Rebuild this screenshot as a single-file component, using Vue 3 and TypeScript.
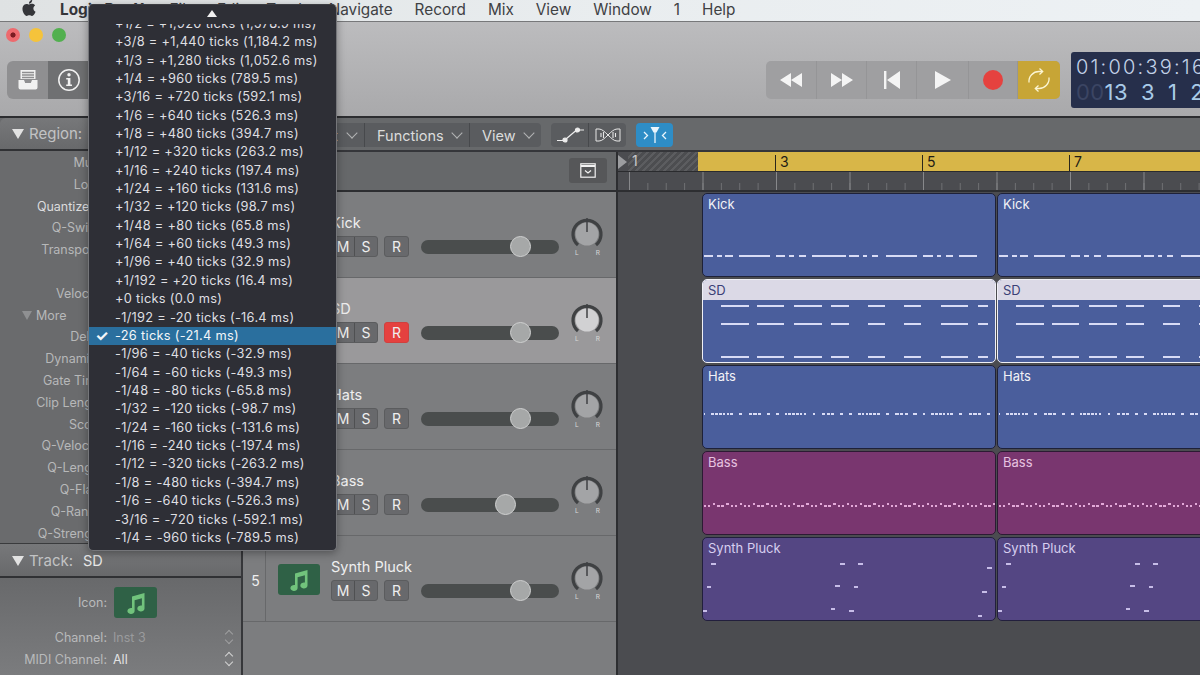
<script setup lang="ts">
interface Note { x: number; y: number; w: number }

const menuItems: string[] = [
  '+1/2 = +1,920 ticks (1,578.9 ms)', '+3/8 = +1,440 ticks (1,184.2 ms)', '+1/3 = +1,280 ticks (1,052.6 ms)',
  '+1/4 = +960 ticks (789.5 ms)', '+3/16 = +720 ticks (592.1 ms)', '+1/6 = +640 ticks (526.3 ms)',
  '+1/8 = +480 ticks (394.7 ms)', '+1/12 = +320 ticks (263.2 ms)', '+1/16 = +240 ticks (197.4 ms)',
  '+1/24 = +160 ticks (131.6 ms)', '+1/32 = +120 ticks (98.7 ms)', '+1/48 = +80 ticks (65.8 ms)',
  '+1/64 = +60 ticks (49.3 ms)', '+1/96 = +40 ticks (32.9 ms)', '+1/192 = +20 ticks (16.4 ms)',
  '+0 ticks (0.0 ms)', '-1/192 = -20 ticks (-16.4 ms)', '-26 ticks (-21.4 ms)',
  '-1/96 = -40 ticks (-32.9 ms)', '-1/64 = -60 ticks (-49.3 ms)', '-1/48 = -80 ticks (-65.8 ms)',
  '-1/32 = -120 ticks (-98.7 ms)', '-1/24 = -160 ticks (-131.6 ms)', '-1/16 = -240 ticks (-197.4 ms)',
  '-1/12 = -320 ticks (-263.2 ms)', '-1/8 = -480 ticks (-394.7 ms)', '-1/6 = -640 ticks (-526.3 ms)',
  '-3/16 = -720 ticks (-592.1 ms)', '-1/4 = -960 ticks (-789.5 ms)',
]
const selectedItem = '-26 ticks (-21.4 ms)'

const params: { label: string; more?: boolean; bright?: boolean }[] = [
  { label: 'Mute:' }, { label: 'Loop:' }, { label: 'Quantize:', bright: true }, { label: 'Q-Swing:' }, { label: 'Transpose:' },
  { label: '' }, { label: 'Velocity:' }, { label: 'More', more: true }, { label: 'Delay:' }, { label: 'Dynamics:' },
  { label: 'Gate Time:' }, { label: 'Clip Length:' }, { label: 'Score:' }, { label: 'Q-Velocity:' },
  { label: 'Q-Length:' }, { label: 'Q-Flam:' }, { label: 'Q-Range:' }, { label: 'Q-Strength:' },
]

const segs = (list: number[][], y: number): Note[] =>
  list.map(([a, b]) => ({ x: (a - 21) / 3, y, w: (b - a) / 3 }))

const kick = segs([[24, 50], [62, 78], [88, 112], [130, 222], [240, 268], [280, 295], [308, 330], [349, 450],
  [460, 490], [500, 514], [528, 547], [570, 663], [680, 710], [722, 735], [750, 770], [790, 843]], 61)

const sdX = [[74, 160], [184, 265], [295, 378], [405, 460], [515, 567], [625, 674], [735, 815], [845, 877]]
const sd = [...segs(sdX, 25), ...segs(sdX, 43), ...segs(sdX, 76)]

const hats: Note[] = (() => {
  const out: Note[] = [{ x: 1, y: 47, w: 1.4 }]
  for (let bar = 0; bar < 4; bar++) {
    const o = bar * 220
    for (let d = 0; d < 6; d++) out.push({ x: (46 + o + d * 11.4 - 21) / 3, y: 47, w: 2.6 })
    for (const [a, b] of [[130, 138], [158, 168], [172, 182], [186, 195], [212, 222], [240, 248]]) {
      if (a + o < 890) out.push({ x: (a + o - 21) / 3, y: 47, w: (b - a) / 3 })
    }
  }
  return out
})()

const bass: Note[] = (() => {
  const out: Note[] = []
  for (let i = 0; i < 22; i++) {
    const b = 1 + i * 13.35
    out.push({ x: b, y: 53, w: 2.4 }, { x: b + 4, y: 53, w: 2.4 }, { x: b + 9, y: 51, w: 2.4 })
  }
  return out
})()

const synth: Note[] = [[53, 25], [39, 48], [27, 72], [439, 25], [494, 25], [425, 47], [480, 48], [411, 70], [466, 72],
  [880, 29], [866, 53], [852, 77]].map(([x, y]) => ({ x: (x - 21 - 7) / 3, y, w: 4.6 }))

const tracks = [
  { n: 1, name: 'Kick', rec: false, sel: false, fader: 99, cls: 'blue', notes: kick },
  { n: 2, name: 'SD', rec: true, sel: true, fader: 99, cls: 'sel', notes: sd },
  { n: 3, name: 'Hats', rec: false, sel: false, fader: 99, cls: 'blue', notes: hats },
  { n: 4, name: 'Bass', rec: false, sel: false, fader: 84, cls: 'plum', notes: bass },
  { n: 5, name: 'Synth Pluck', rec: false, sel: false, fader: 99, cls: 'violet', notes: synth },
]
const marks = ['3', '5', '7', '9']
</script>

<template>
  <div class="app">
    <header class="menubar">
      <svg class="apple" viewBox="0 0 24 24"><path d="M12.152 6.896c-.948 0-2.415-1.078-3.96-1.04-2.04.027-3.91 1.183-4.961 3.014-2.117 3.675-.546 9.103 1.519 12.09 1.013 1.454 2.208 3.09 3.792 3.039 1.52-.065 2.09-.987 3.935-.987 1.831 0 2.35.987 3.96.948 1.637-.026 2.676-1.48 3.676-2.948 1.156-1.688 1.636-3.325 1.662-3.415-.039-.013-3.182-1.221-3.22-4.857-.026-3.04 2.48-4.494 2.597-4.559-1.429-2.09-3.623-2.324-4.39-2.376-2-.156-3.675 1.09-4.61 1.09zM15.53 3.83c.843-1.012 1.4-2.427 1.245-3.83-1.207.052-2.662.805-3.532 1.818-.78.896-1.454 2.338-1.273 3.714 1.338.104 2.715-.688 3.559-1.701"/></svg>
      <b class="appname">Logic Pro X</b>
      <span>File</span><span>Edit</span><span>Track</span><span>Navigate</span>
      <span>Record</span><span>Mix</span><span>View</span><span>Window</span><span>1</span><span>Help</span>
    </header>

    <section class="toolbar">
      <div class="tb-left">
        <div class="lights"><i class="l red"></i><i class="l yellow"></i><i class="l green"></i></div>
        <div class="tb-seg">
          <div class="tb-btn on">
            <svg width="22" height="24" viewBox="0 0 22 24" fill="none" stroke="#f1f1f1" stroke-width="1.3">
              <rect x="3.5" y="2" width="15" height="9" fill="#f1f1f1" stroke="none"/>
              <path d="M5 4.5h12M5 7h12M5 9.5h12" stroke="#8e8e90"/>
              <path d="M1.5 12h5.5l1.2 3h5.6l1.2-3h5.5v7.5a2 2 0 0 1-2 2h-15a2 2 0 0 1-2-2z" fill="#f1f1f1" stroke="none"/>
            </svg>
          </div>
          <div class="tb-btn">
            <svg width="24" height="24" viewBox="0 0 24 24" fill="none">
              <circle cx="12" cy="12" r="10.2" stroke="#f1f1f1" stroke-width="1.5"/>
              <circle cx="12" cy="6.8" r="1.7" fill="#f1f1f1"/>
              <path d="M9.2 10h4.2v6.4h1.6v1.6H9.2v-1.6h1.6v-4.8H9.2z" fill="#f1f1f1"/>
            </svg>
          </div>
        </div>
      </div>
      <div class="transport">
        <div class="t-cell" style="width:51px"><svg width="24" height="16" viewBox="0 0 24 16"><path d="M12 1v14L1 8zM23 1v14L12 8z" fill="#f4f4f4"/></svg></div>
        <div class="t-cell" style="width:50px"><svg width="24" height="16" viewBox="0 0 24 16"><path d="M1 1v14l11-7zM12 1v14l11-7z" fill="#f4f4f4"/></svg></div>
        <div class="t-cell" style="width:50px"><svg width="18" height="18" viewBox="0 0 18 18"><path d="M1 0h2.4v18H1zM17 0v18L4 9z" fill="#f4f4f4"/></svg></div>
        <div class="t-cell" style="width:52px"><svg width="18" height="18" viewBox="0 0 18 18"><path d="M1 0l16 9L1 18z" fill="#f4f4f4"/></svg></div>
        <div class="t-cell" style="width:49px"><i class="rec-dot"></i></div>
        <div class="t-cell cycle">
          <svg width="26" height="26" viewBox="0 0 26 26" fill="none" stroke="#fbf5d2" stroke-width="1.3">
            <path d="M3 15.500A10 10 0 0 1 13 4.500h3M23 10.500a10 10 0 0 1-10 11h-3"/>
            <path d="M13.500 1.500l3.200 3-3.200 3M12.500 18.500l-3.200 3 3.200 3"/>
          </svg>
        </div>
      </div>
      <div class="lcd">
        <div class="lcd-a">01:00:39:16</div>
        <div class="lcd-b"><span class="dim">00</span>13<span class="sp">3</span><span class="sp">1</span><span class="sp">2</span></div>
      </div>
    </section>

    <main class="body">
      <aside class="inspector">
        <div class="insp-head region"><i class="tri"></i>Region:</div>
        <div class="params">
          <div v-for="(p, i) in params" :key="i" class="param" :class="{ more: p.more, bright: p.bright }">
            <template v-if="p.more"><i class="tri small"></i>{{ p.label }}</template>
            <template v-else>{{ p.label }}</template>
          </div>
        </div>
        <div class="insp-head trackh"><i class="tri"></i>Track:<span class="trackname">SD</span></div>
        <div class="track-insp">
          <div class="ti-row icon-row">
            <span class="ti-label">Icon:</span>
            <span class="icon-tile big">
              <svg width="22" height="24" viewBox="0 0 22 24"><path d="M7 5.500 19.500 2v15.500a3.600 3 0 1 1-2.600-2.900V7.200L9.600 9.200V20a3.600 3 0 1 1-2.600-2.900z" fill="#71c37c"/></svg>
            </span>
          </div>
          <div class="ti-row"><span class="ti-label">Channel:</span><span class="ti-val dim-v">Inst 3</span><i class="updown faint"></i></div>
          <div class="ti-row"><span class="ti-label">MIDI Channel:</span><span class="ti-val">All</span><i class="updown"></i></div>
        </div>
      </aside>

      <div class="workspace">
        <div class="toolbar2">
          <div class="seg">
            <div class="seg-cell edit">Edit<i class="chev"></i></div>
            <div class="seg-cell fn">Functions<i class="chev"></i></div>
            <div class="seg-cell vw">View<i class="chev"></i></div>
          </div>
          <div class="seg tools">
            <div class="tool-cell">
              <svg width="28" height="16" viewBox="0 0 28 16" fill="none" stroke="#eee" stroke-width="1.2">
                <path d="M1 13.500h6M10 12l10-8.500M23 3h5"/>
                <circle cx="9" cy="13" r="2" fill="#eee"/><circle cx="21.500" cy="3" r="2" fill="#eee"/>
              </svg>
            </div>
            <div class="tool-cell">
              <svg width="26" height="16" viewBox="0 0 26 16" fill="none" stroke="#e6e6e6" stroke-width="1">
                <path d="M1 2h3c6 0 12 12 18 12h3V2h-3C16 2 10 14 4 14H1z"/>
                <path d="M6 6v4M8.500 5v6M18 5v6M20.500 6v4" stroke-width="1.100"/>
              </svg>
            </div>
          </div>
          <div class="catch">
            <svg width="26" height="18" viewBox="0 0 26 18" fill="none" stroke="#eaf5fc" stroke-width="1.300">
              <path d="M2 6l3.500 3.500L2 13M24 6l-3.500 3.500L24 13M13 5v12"/>
              <path d="M8.500 1h9l-3 5.500h-3z" fill="#eaf5fc" stroke="none"/>
            </svg>
          </div>
        </div>

        <div class="content">
          <div class="tracks">
            <div class="tracks-head">
              <div class="head-btn">
                <svg width="16" height="15" viewBox="0 0 16 15" fill="none" stroke="#f2f2f2" stroke-width="1.200">
                  <rect x=".8" y=".8" width="14.400" height="13.400"/>
                  <path d="M1 3h14" stroke-width="2"/>
                  <path d="M5 7.500l3 2.500 3-2.500"/>
                </svg>
              </div>
            </div>
            <div v-for="t in tracks" :key="t.n" class="track" :class="{ selected: t.sel }">
              <div class="t-num">{{ t.n }}</div>
              <div class="t-icon">
                <span class="icon-tile">
                  <svg width="22" height="24" viewBox="0 0 22 24"><path d="M7 5.500 19.500 2v15.500a3.600 3 0 1 1-2.600-2.900V7.200L9.600 9.200V20a3.600 3 0 1 1-2.600-2.900z" fill="#71c37c"/></svg>
                </span>
              </div>
              <div class="t-main">
                <div class="t-name">{{ t.name }}</div>
                <div class="t-controls">
                  <div class="ms"><span>M</span><span>S</span></div>
                  <div class="r" :class="{ armed: t.rec }">R</div>
                  <div class="fader"><i class="thumb" :style="{ left: t.fader + 'px' }"></i></div>
                </div>
              </div>
              <div class="pan">
                <svg width="34" height="34" viewBox="0 0 34 34">
                  <path d="M8 28A14 14 0 1 1 26 28" fill="none" stroke="#3f4143" stroke-width="3.200"/>
                  <circle cx="17" cy="17" r="11.500" :fill="t.sel ? '#d1d1d3' : '#a3a4a6'"/>
                  <path d="M17 1v14" stroke="#3f4143" stroke-width="1.500"/>
                </svg>
                <div class="lr"><span>L</span><span>R</span></div>
              </div>
            </div>
          </div>

          <div class="timeline">
            <div class="ruler">
              <div class="ruler-top">
                <div class="ph-col"><i class="ph"></i></div>
                <div class="hatch">1</div>
                <div class="gold">
                  <div class="gold-lead"></div>
                  <div v-for="m in marks" :key="m" class="mark">{{ m }}</div>
                </div>
              </div>
              <div class="ruler-bot"><div class="ticks"></div></div>
            </div>
            <div class="lanes">
              <div v-for="t in tracks" :key="t.n" class="lane">
                <div v-for="c in 2" :key="c" class="region-box" :class="t.cls">
                  <div class="r-title">{{ t.name }}</div>
                  <i v-for="(n, k) in t.notes" :key="k" class="note"
                     :style="{ left: n.x + 'px', top: n.y + 'px', width: n.w + 'px' }"></i>
                </div>
              </div>
            </div>
          </div>
        </div>
      </div>
    </main>

    <nav class="popup">
      <div class="up-arrow"></div>
      <div class="pop-scroll">
        <div class="pop-list">
          <div v-for="m in menuItems" :key="m" class="pop-item" :class="{ active: m === selectedItem }">
            <span class="check">{{ m === selectedItem ? '✓' : '' }}</span>{{ m }}
          </div>
        </div>
      </div>
    </nav>
  </div>
</template>

<style scoped>
.app { position: relative; width: 1200px; height: 675px; overflow: hidden; display: flex; flex-direction: column; font-family: Inter, "Noto Sans", sans-serif; background: #4b4c50; }

.menubar { height: 22px; flex: none; display: flex; align-items: center; gap: 22px; background: linear-gradient(90deg, #dfe2e3, #e9edef 50%, #edf1f4); color: #3f4144; font-size: 15.300px; border-bottom: 1px solid #77787a; box-sizing: border-box; white-space: nowrap; overflow: hidden; padding-bottom: 3px; }
.apple { width: 16px; height: 18px; margin: -3px 0 0 21px; fill: #35363a; flex: none; }
.appname { margin: 0 3px 0 1px; font-weight: 700; color: #35363a; }

.toolbar { height: 96px; flex: none; display: flex; background: linear-gradient(180deg, #bcbcbe, #a9a9ab); border-bottom: 2px solid #2c2d30; box-sizing: border-box; }
.tb-left { width: 766px; flex: none; }
.lights { display: flex; gap: 9px; padding: 6px 0 0 6px; height: 14px; }
.l { width: 14px; height: 14px; border-radius: 50%; display: block; }
.red { background: radial-gradient(circle, #7b1d22 22%, #ed6a6e 30%); }
.yellow { background: #f5c33b; }
.green { background: #52b04f; }
.tb-seg { display: flex; margin: 19px 0 0 7px; width: 100px; height: 38px; border-radius: 6px; overflow: hidden; }
.tb-btn { flex: 1; display: flex; align-items: center; padding-left: 9px; background: #6f7072; }
.tb-btn.on { flex: none; width: 41px; padding-left: 0; justify-content: center; background: #8f8f91; }

.transport { display: flex; height: 38px; margin-top: 39px; width: 294px; flex: none; border-radius: 5px; overflow: hidden; background: #9f9fa1; }
.t-cell { display: flex; align-items: center; justify-content: center; box-sizing: border-box; border-right: 1px solid #959597; flex: none; }
.t-cell.cycle { width: 42px; background: #c7a536; border: 0; }
.rec-dot { width: 20px; height: 20px; border-radius: 50%; background: #e5423f; display: block; }

.lcd { margin: 30px 0 0 11px; width: 140px; height: 56px; background: #262f4b; border-radius: 3px; color: #c3d2e8; padding: 3px 0 0 5px; box-sizing: border-box; font-size: 20px; line-height: 25px; white-space: nowrap; flex: none; }
.lcd-a { letter-spacing: 2.200px; font-weight: 300; }
.lcd-b { font-size: 22px; color: #a9cbe8; letter-spacing: .4px; }
.dim { color: #3b4563; }
.sp { margin-left: 13px; }

.body { flex: 1; display: flex; min-height: 0; }
.inspector { width: 241px; flex: none; background: #6a6b6d; color: #b7b8b9; font-size: 12.500px; display: flex; flex-direction: column; }
.insp-head { display: flex; align-items: center; color: #c2c3c4; font-size: 15px; background: linear-gradient(180deg, #77787a, #68696b); border-bottom: 2px solid #303134; box-sizing: border-box; }
.region { height: 33px; border-radius: 6px 0 0 0; padding-left: 12px; }
.trackh { height: 35px; padding: 1px 0 0 12px; border-top: 1px solid #3a3b3d; }
.trackname { margin-left: 10px; color: #e6e6e6; font-size: 14.500px; }
.tri { width: 0; height: 0; border-left: 6px solid transparent; border-right: 6px solid transparent; border-top: 10px solid #e2e2e2; margin-right: 5px; display: block; }
.tri.small { border-left-width: 5.500px; border-right-width: 5.500px; border-top: 9px solid #8f9092; margin: 0 4px 0 0; }
.params { height: 392px; flex: none; padding-top: 1px; box-sizing: border-box; }
.param { height: 21.800px; line-height: 21.800px; width: 107px; text-align: right; white-space: nowrap; }
.param.bright { color: #dcdcdd; padding-right: 14px; box-sizing: border-box; }
.param.more { display: flex; align-items: center; justify-content: flex-start; padding-left: 22px; box-sizing: border-box; width: 100%; }
.track-insp { flex: 1; background: linear-gradient(180deg, #68696b, #7b7c7e); }
.ti-row { display: flex; align-items: center; height: 22px; }
.icon-row { height: 41px; padding-top: 4px; margin-bottom: 3px; }
.ti-label { width: 107px; text-align: right; color: #b9babb; flex: none; white-space: nowrap; }
.ti-val { margin-left: 6px; color: #e2e2e2; flex: 1; }
.dim-v { color: #9a9b9d; }
.updown { width: 8px; height: 14px; margin-right: 8px; display: block; position: relative; }
.updown::before, .updown::after { content: ""; position: absolute; left: 1px; width: 5px; height: 5px; border: solid #d3d3d3; border-width: 1px 0 0 1px; transform: rotate(45deg); }
.updown::before { top: 1px; }
.updown::after { bottom: 1px; transform: rotate(225deg); }
.updown.faint { opacity: .45; }

.icon-tile { width: 42px; height: 31px; background: #2f6146; border-radius: 3px; display: flex; align-items: center; justify-content: center; flex: none; }
.icon-tile.big { width: 43px; margin-left: 7px; }

.workspace { flex: 1; display: flex; flex-direction: column; min-width: 0; border-left: 2px solid #36373a; }
.toolbar2 { height: 34px; flex: none; display: flex; align-items: center; background: #67696b; border-bottom: 2px solid #35363a; box-sizing: border-box; padding-left: 57px; }
.seg { display: flex; height: 24px; background: #5a5c5f; border-radius: 4px; color: #dcdcdc; font-size: 14.500px; margin-top: 2px; }
.seg-cell { display: flex; align-items: center; box-sizing: border-box; padding-left: 12px; border-right: 1px solid #47494c; position: relative; }
.seg-cell:last-child { border-right: 0; }
.edit { width: 65px; }
.fn { width: 105px; }
.vw { width: 71px; }
.chev { position: absolute; right: 8px; top: 6px; width: 7px; height: 7px; border: solid #b3b4b5; border-width: 0 1px 1px 0; transform: rotate(45deg); }
.tools { margin-left: 10px; }
.tool-cell { width: 37px; display: flex; align-items: center; justify-content: center; border-right: 1px solid #47494c; }
.tool-cell:last-child { border-right: 0; }
.catch { width: 37px; height: 24px; margin: 2px 0 0 10px; background: #2e8dc6; border-radius: 4px; display: flex; align-items: center; justify-content: center; }

.content { flex: 1; display: flex; min-height: 0; }
.tracks { width: 373px; flex: none; background: #7c7d7f; border-right: 2px solid #2d2e31; color: #efefef; box-sizing: content-box; }
.tracks-head { height: 40px; background: #66686a; border-bottom: 2px solid #2d2e31; box-sizing: border-box; display: flex; justify-content: flex-end; align-items: flex-start; padding: 6px 9px 0 0; }
.head-btn { width: 38px; height: 25px; background: #565759; border-radius: 3px; display: flex; align-items: center; justify-content: center; }
.track { height: 86px; display: flex; box-sizing: border-box; border-bottom: 1px solid #67686a; }
.track.selected { background: #9a999b; }
.t-num { width: 23px; flex: none; border-right: 1px solid #67686a; text-align: center; font-size: 14px; line-height: 38px; padding: 26px 0 0 3px; box-sizing: border-box; }
.t-icon { width: 65px; flex: none; padding: 28px 0 0 12px; box-sizing: border-box; }
.t-main { width: 240px; flex: none; padding-top: 21px; box-sizing: border-box; }
.t-name { font-size: 14.500px; line-height: 18px; height: 22px; padding-top: 1px; white-space: nowrap; }
.t-controls { display: flex; align-items: center; }
.ms { display: flex; width: 47px; height: 21px; background: #68696c; border: 1px solid #5b5c5e; border-radius: 3px; box-sizing: border-box; font-size: 14px; }
.ms span { flex: 1; text-align: center; line-height: 19px; }
.ms span + span { border-left: 1px solid #4f5052; }
.r { width: 25px; height: 21px; margin-left: 6px; background: #68696c; border: 1px solid #5b5c5e; border-radius: 3px; box-sizing: border-box; text-align: center; line-height: 19px; font-size: 14px; }
.r.armed { background: #e5413f; border-color: #d0403e; }
.fader { position: relative; width: 138px; height: 14px; margin-left: 12px; background: #4a4d4d; border-radius: 7px; }
.thumb { position: absolute; top: -4px; margin-left: -10px; width: 21px; height: 21px; border-radius: 50%; background: #a6a8a8; border: 1px solid #cfd0d0; box-sizing: border-box; display: block; }
.pan { width: 34px; flex: none; margin-left: -1px; padding-top: 25px; box-sizing: border-box; position: relative; }
.pan svg { display: block; }
.lr { position: absolute; top: 57px; left: 5px; width: 25px; display: flex; justify-content: space-between; font-size: 6.500px; line-height: 8px; color: #d9d9d9; }

.timeline { flex: 1; min-width: 0; overflow: hidden; background: #4b4c50; }
.ruler { height: 40px; border-bottom: 2px solid #2d2e31; box-sizing: border-box; }
.ruler-top { height: 20px; display: flex; border-bottom: 1px solid #2a2b2e; box-sizing: border-box; background: #4b4c50; }
.ph-col { width: 10px; flex: none; display: flex; align-items: center; }
.ph { width: 0; height: 0; border-top: 7px solid transparent; border-bottom: 7px solid transparent; border-left: 9px solid #9c9da0; display: block; }
.hatch { width: 70px; flex: none; color: #c9c9cb; font-size: 14px; line-height: 18px; padding-left: 4px; box-sizing: border-box; background: repeating-linear-gradient(135deg, #4c4d50 0 3px, #5c5d60 3px 5px); }
.gold { flex: 1; display: flex; background: #d8b648; color: #1f1d16; font-size: 14px; line-height: 18px; }
.gold-lead { width: 77px; flex: none; }
.mark { width: 147px; flex: none; box-sizing: border-box; border-left: 1px solid #2a261b; padding-left: 4px; margin-top: 3px; line-height: 14px; }
.ruler-bot { height: 18px; }
.ticks { margin-left: 11px; height: 100%; background-image: linear-gradient(90deg, #87888b 1px, transparent 1px), linear-gradient(90deg, #6f7073 1px, transparent 1px); background-size: 73.500px 100%, 18.375px 7px; background-position: 0 0, 0 100%; background-repeat: repeat-x; }

.lanes { padding: 1px 0 0 84px; }
.lane { height: 86px; display: flex; gap: 1px; width: 700px; }
.region-box { position: relative; width: 294px; height: 84px; flex: none; border: 1px solid #1e2138; border-radius: 5px; box-sizing: border-box; color: #f2f2f6; overflow: hidden; font-size: 13px; }
.r-title { height: 20px; line-height: 21px; padding-left: 5px; white-space: nowrap; }
.note { position: absolute; height: 2px; display: block; background: #d8dbf5; }
.blue { background: #4a5e9c; }
.sel { background: #4a5e9c; border-color: #f0f0f6; }
.sel .r-title { background: #dbd9e6; color: #3a4076; }
.plum { background: #79366f; border-color: #2c1a33; color: #e7c3e0; }
.plum .note { background: #e3a9d8; }
.violet { background: #544683; border-color: #221f3d; color: #d7cff0; }
.violet .note { background: #c7bde8; }

.popup { position: absolute; left: 88px; top: 4px; width: 249px; height: 547px; box-sizing: border-box; background: #2e2f36; border: 1px solid #75767a; border-top-color: #3c3d42; border-radius: 5px; color: #dfdfe2; font-size: 12.800px; display: flex; flex-direction: column; z-index: 5; box-shadow: 0 2px 8px rgba(0,0,0,.35); }
.up-arrow { height: 19px; flex: none; position: relative; }
.up-arrow::after { content: ""; position: absolute; left: 118px; top: 5px; border-left: 5px solid transparent; border-right: 5px solid transparent; border-bottom: 7px solid #f0f0f0; }
.pop-scroll { flex: 1; overflow: hidden; }
.pop-list { margin-top: -9.200px; }
.pop-item { height: 18.370px; line-height: 18.370px; white-space: nowrap; letter-spacing: .3px; display: flex; }
.check { width: 26px; flex: none; text-align: center; font-size: 15px; font-weight: 700; }
.pop-item.active { background: #2a6f9e; color: #f2f6f9; }
</style>
